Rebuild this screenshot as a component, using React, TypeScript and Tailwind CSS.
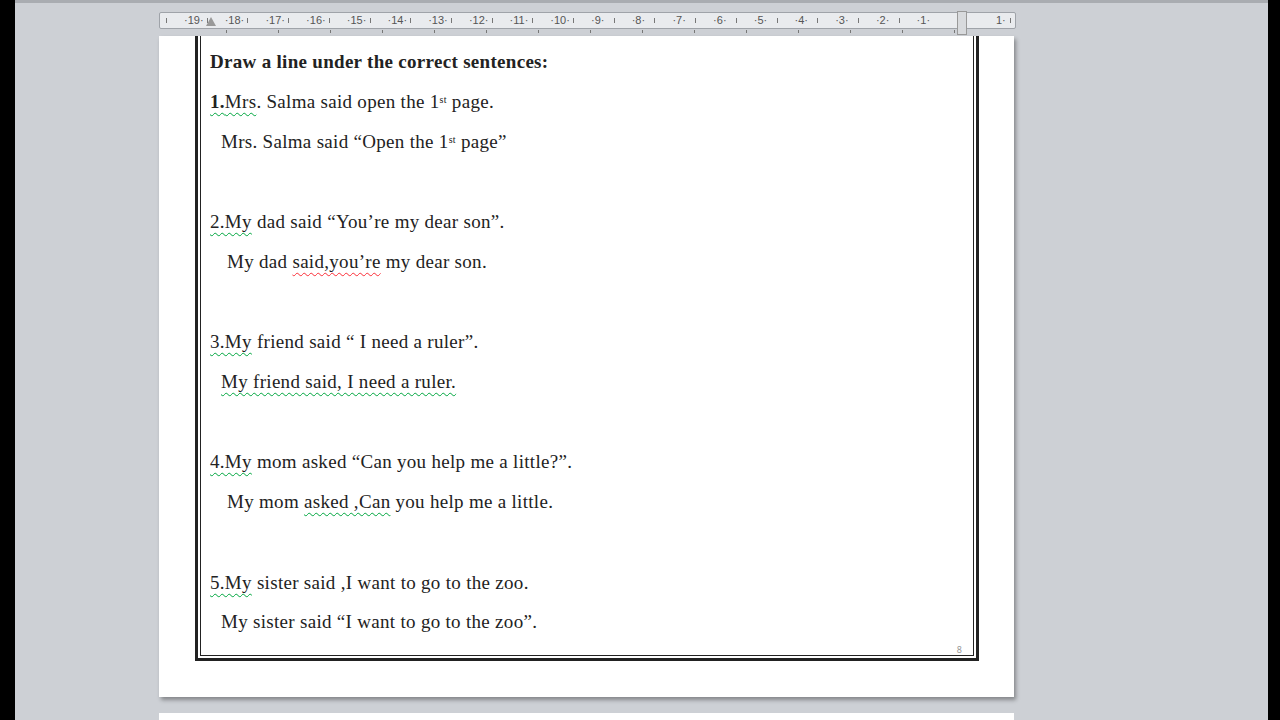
import React from "react";

const W = "underline decoration-wavy decoration-green-600 decoration-1 underline-offset-4";
const R = "underline decoration-wavy decoration-red-500 decoration-1 underline-offset-4";

function Line({ children, pl = "pl-0", bold = false }: { children: React.ReactNode; pl?: string; bold?: boolean }) {
  return <div className={`h-[40px] flex items-center ${pl} ${bold ? "font-bold" : ""}`}><span>{children}</span></div>;
}

export default function App() {
  const nums = [19, 18, 17, 16, 15, 14, 13, 12, 11, 10, 9, 8, 7, 6, 5, 4, 3, 2, 1];
  return (
    <div className="w-[1280px] h-[720px] overflow-hidden bg-black flex">
      <div className="w-[15px] bg-black" />
      <div className="relative w-[1253px] h-full bg-[#cdd0d5] border-t-[3px] border-[#a9acb1]">
        {/* ruler */}
        <div className="absolute left-[144px] top-[9px] w-[857px] h-[17px] bg-[#e9ebee] border border-[#9fa3a9] rounded-[2px] text-[11px] text-[#555] font-[family-name:Liberation_Sans] leading-[15px]">
          {nums.map((n, i) => (
            <span key={n} className="absolute top-0" style={{ left: 24 + i * 40.7 }}>·{n}·</span>
          ))}
          {nums.map((n, i) => (
            <span key={"t" + n} className="absolute top-[5px] w-[1px] h-[5px] bg-[#777]" style={{ left: 6 + i * 40.7 }} />
          ))}
          {nums.map((n, i) => (
            <span key={"b" + n} className="absolute top-[17px] w-[1px] h-[3px] bg-[#777]" style={{ left: 66 + i * 52 }} />
          )).slice(0, 15)}
          <span className="absolute left-[850px] top-[5px] w-[1px] h-[5px] bg-[#777]" />
          <span className="absolute left-[836px] top-0">1·</span>
          <div className="absolute left-[46px] top-[4px] w-0 h-0 border-l-[5px] border-r-[5px] border-b-[9px] border-l-transparent border-r-transparent border-b-[#999]" />
          <div className="absolute left-[797px] top-[-2px] w-[10px] h-[24px] bg-[#d8dadd] border border-[#999]" />
        </div>
        {/* page */}
        <div className="absolute left-[144px] top-[33px] w-[855px] h-[661px] bg-white shadow-[2px_3px_4px_rgba(0,0,0,0.35)]">
          <div className="ml-[36px] w-[784px] h-[625px] border-x-[3px] border-b-[3px] border-[#222] relative">
            <div className="absolute inset-x-[2px] top-0 bottom-[2px] border-x border-b border-[#222]" />
            <div className="absolute right-[14px] bottom-[2px] text-[9px] text-[#999]">8</div>
            <div className="relative pl-[12px] pt-[6px] text-[19px] text-[#222] font-[family-name:Liberation_Serif] tracking-[0.3px]">
              <Line bold>Draw a line under the correct sentences:</Line>
              <Line><span className={W}><b>1.</b>Mrs</span>. Salma said open the 1<sup className="text-[10px]">st</sup>&nbsp;page.</Line>
              <Line pl="pl-[11px]">Mrs. Salma said “Open the 1<sup className="text-[10px]">st</sup>&nbsp;page”</Line>
              <div className="h-[40px]" />
              <Line><span className={W}>2.My</span> dad said “You’re my dear son”.</Line>
              <Line pl="pl-[17px]">My dad <span className={R}>said,you’re</span> my dear son.</Line>
              <div className="h-[40px]" />
              <Line><span className={W}>3.My</span> friend said “ I need a ruler”.</Line>
              <Line pl="pl-[11px]"><span className={W}>My friend said, I need a ruler.</span></Line>
              <div className="h-[40px]" />
              <Line><span className={W}>4.My</span> mom asked “Can you help me a little?”.</Line>
              <Line pl="pl-[17px]">My mom <span className={W}>asked ,Can</span> you help me a little.</Line>
              <div className="h-[41px]" />
              <Line><span className={W}>5.My</span> sister said ,I want to go to the zoo.</Line>
              <div className="h-[38px] flex items-center pl-[11px]">My sister said “I want to go to the zoo”.</div>
            </div>
          </div>
        </div>
        <div className="absolute left-[144px] top-[710px] w-[855px] h-[20px] bg-white" />
      </div>
      <div className="w-[12px] bg-black" />
    </div>
  );
}
